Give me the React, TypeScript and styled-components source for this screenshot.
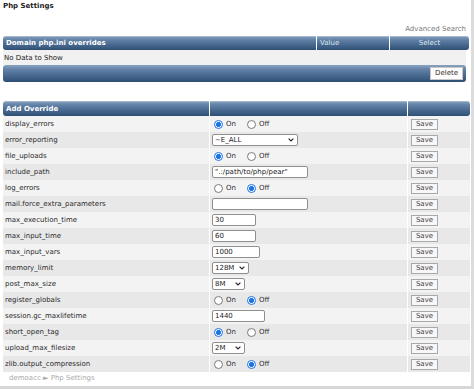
import React from "react";
import styled, { createGlobalStyle } from "styled-components";

const Global = createGlobalStyle`
  html, body { margin: 0; padding: 0; background: #fff; }
  body { font-family: "DejaVu Sans", Verdana, sans-serif; font-size: 7px; color: #333; }
  * { box-sizing: border-box; }
`;

const Page = styled.div`
  width: 474px;
  height: 389px;
  padding: 2px 5px 0 3px;
  border-right: 3px solid #dcdcdc;
  border-bottom: 3px solid #d6d6d6;
  overflow: hidden;
`;

const Title = styled.div`
  font-weight: bold;
  font-size: 7px;
  line-height: 9px;
  color: #222;
`;

const AdvancedSearch = styled.div`
  margin-top: 14px;
  text-align: right;
  color: #777;
  line-height: 9px;
`;

const headerGradient = `linear-gradient(to bottom, #8aa4c2 0%, #6583a8 25%, #4c6d94 55%, #3a5a80 85%, #2e4d72 100%)`;

const HeaderRow = styled.div<{ $cols: string; $h: number }>`
  display: grid;
  grid-template-columns: ${(p) => p.$cols};
  column-gap: 1px;
  height: ${(p) => p.$h}px;
`;

const HeaderCell = styled.div<{ $center?: boolean; $first?: boolean; $last?: boolean }>`
  background: ${headerGradient};
  color: #fff;
  font-weight: bold;
  display: flex;
  align-items: center;
  justify-content: ${(p) => (p.$center ? "center" : "flex-start")};
  padding-left: ${(p) => (p.$center ? 0 : 3)}px;
  border-radius: ${(p) => (p.$first ? "3px 0 0 3px" : p.$last ? "0 3px 3px 0" : "0")};
  box-shadow: inset 0 1px 0 rgba(255, 255, 255, 0.25);
`;

const HeaderText = styled.span<{ $light?: boolean }>`
  font-weight: ${(p) => (p.$light ? "normal" : "bold")};
  color: ${(p) => (p.$light ? "#dde6f0" : "#fff")};
`;

const EmptyRow = styled.div`
  height: 15px;
  background: #f1f1f1;
  display: flex;
  align-items: center;
  padding-left: 1px;
  color: #222;
`;

const FooterBar = styled.div`
  height: 17px;
  background: ${headerGradient};
  border-radius: 3px;
  display: flex;
  align-items: center;
  justify-content: flex-end;
  padding-right: 3px;
`;

const DeleteButton = styled.button`
  height: 13px;
  padding: 0 4px;
  border: 1px solid #c8c8c8;
  background: #fdfdfd;
  color: #333;
  font-family: inherit;
  font-size: 7px;
  line-height: 11px;
  cursor: pointer;
`;

const Spacer = styled.div<{ $h: number }>`
  height: ${(p) => p.$h}px;
`;

const COLS2 = "206px 197px 62px";

const Row = styled.div`
  display: grid;
  grid-template-columns: ${COLS2};
  column-gap: 1px;
  height: 16px;
  background: #fff;
`;

const Cell = styled.div<{ $alt: boolean }>`
  background: ${(p) => (p.$alt ? "#e8e8e8" : "#f3f3f3")};
  display: flex;
  align-items: center;
  padding-left: 2px;
  color: #2a2a2a;
  white-space: nowrap;
`;

const RadioLabel = styled.label`
  display: inline-flex;
  align-items: center;
  margin-right: 9px;
  color: #333;
  margin-left: 1px;
`;

const Radio = styled.input.attrs({ type: "radio" })`
  appearance: none;
  width: 9px;
  height: 9px;
  margin: 0 3px 0 1px;
  border: 1px solid #7a7a7a;
  border-radius: 50%;
  background: #fff;
  &:checked {
    border-color: #1a73e8;
    background: radial-gradient(circle, #1a73e8 0 2.2px, #fff 2.6px);
  }
`;

const TextInput = styled.input<{ $w: number }>`
  width: ${(p) => p.$w}px;
  height: 12px;
  border: 1px solid #8f8f8f;
  border-radius: 2px;
  padding: 0 2px;
  font-family: inherit;
  font-size: 7px;
  color: #222;
  background: #fff;
`;

const SelectWrap = styled.div<{ $w: number }>`
  position: relative;
  width: ${(p) => p.$w}px;
  height: 12px;
`;

const Select = styled.select`
  appearance: none;
  width: 100%;
  height: 12px;
  border: 1px solid #8f8f8f;
  border-radius: 2px;
  padding: 0 2px;
  font-family: inherit;
  font-size: 7px;
  color: #222;
  background: #fff;
`;

const Chevron = styled.svg`
  position: absolute;
  right: 4px;
  top: 4px;
  width: 6px;
  height: 4px;
  pointer-events: none;
`;

const SaveCell = styled(Cell)`
  padding-left: 3px;
`;

const SaveButton = styled.button`
  width: 27px;
  height: 11px;
  padding: 0;
  border: 1px solid #a9a9a9;
  background: #f7f7f7;
  color: #444;
  font-family: inherit;
  font-size: 7px;
  line-height: 9px;
`;

const Breadcrumb = styled.div`
  margin-top: 2px;
  padding-left: 6px;
  color: #aaa;
  line-height: 9px;
`;

type Ctl =
  | { kind: "radio"; on: boolean }
  | { kind: "text"; value: string; w: number }
  | { kind: "select"; value: string; w: number };

const rows: { name: string; ctl: Ctl }[] = [
  { name: "display_errors", ctl: { kind: "radio", on: true } },
  { name: "error_reporting", ctl: { kind: "select", value: "~E_ALL", w: 86 } },
  { name: "file_uploads", ctl: { kind: "radio", on: true } },
  { name: "include_path", ctl: { kind: "text", value: '".:/path/to/php/pear"', w: 96 } },
  { name: "log_errors", ctl: { kind: "radio", on: false } },
  { name: "mail.force_extra_parameters", ctl: { kind: "text", value: "", w: 96 } },
  { name: "max_execution_time", ctl: { kind: "text", value: "30", w: 44 } },
  { name: "max_input_time", ctl: { kind: "text", value: "60", w: 44 } },
  { name: "max_input_vars", ctl: { kind: "text", value: "1000", w: 48 } },
  { name: "memory_limit", ctl: { kind: "select", value: "128M", w: 37 } },
  { name: "post_max_size", ctl: { kind: "select", value: "8M", w: 33 } },
  { name: "register_globals", ctl: { kind: "radio", on: false } },
  { name: "session.gc_maxlifetime", ctl: { kind: "text", value: "1440", w: 53 } },
  { name: "short_open_tag", ctl: { kind: "radio", on: true } },
  { name: "upload_max_filesize", ctl: { kind: "select", value: "2M", w: 33 } },
  { name: "zlib.output_compression", ctl: { kind: "radio", on: false } },
];

function Control({ name, ctl }: { name: string; ctl: Ctl }) {
  if (ctl.kind === "radio") {
    return (
      <>
        <RadioLabel>
          <Radio name={name} defaultChecked={ctl.on} />
          On
        </RadioLabel>
        <RadioLabel>
          <Radio name={name} defaultChecked={!ctl.on} />
          Off
        </RadioLabel>
      </>
    );
  }
  if (ctl.kind === "text") {
    return <TextInput $w={ctl.w} defaultValue={ctl.value} />;
  }
  return (
    <SelectWrap $w={ctl.w}>
      <Select defaultValue={ctl.value}>
        <option>{ctl.value}</option>
      </Select>
      <Chevron viewBox="0 0 6 4">
        <path d="M0.6 0.6 L3 3 L5.4 0.6" fill="none" stroke="#222" strokeWidth="1.1" />
      </Chevron>
    </SelectWrap>
  );
}

export default function App() {
  return (
    <Page>
      <Global />
      <Title>Php Settings</Title>
      <AdvancedSearch>Advanced Search</AdvancedSearch>
      <Spacer $h={2} />
      <HeaderRow $cols="313px 72px 79px" $h={14}>
        <HeaderCell $first>
          <HeaderText>Domain php.ini overrides</HeaderText>
        </HeaderCell>
        <HeaderCell>
          <HeaderText $light>Value</HeaderText>
        </HeaderCell>
        <HeaderCell $center $last>
          <HeaderText $light>Select</HeaderText>
        </HeaderCell>
      </HeaderRow>
      <EmptyRow>No Data to Show</EmptyRow>
      <FooterBar>
        <DeleteButton>Delete</DeleteButton>
      </FooterBar>
      <Spacer $h={19} />
      <HeaderRow $cols={COLS2} $h={15}>
        <HeaderCell $first>
          <HeaderText>Add Override</HeaderText>
        </HeaderCell>
        <HeaderCell />
        <HeaderCell $last />
      </HeaderRow>
      {rows.map((r, i) => {
        const alt = i % 2 === 1;
        return (
          <Row key={r.name}>
            <Cell $alt={alt}>{r.name}</Cell>
            <Cell $alt={alt}>
              <Control name={r.name} ctl={r.ctl} />
            </Cell>
            <SaveCell $alt={alt}>
              <SaveButton>Save</SaveButton>
            </SaveCell>
          </Row>
        );
      })}
      <Breadcrumb>demoacc ► Php Settings</Breadcrumb>
    </Page>
  );
}
